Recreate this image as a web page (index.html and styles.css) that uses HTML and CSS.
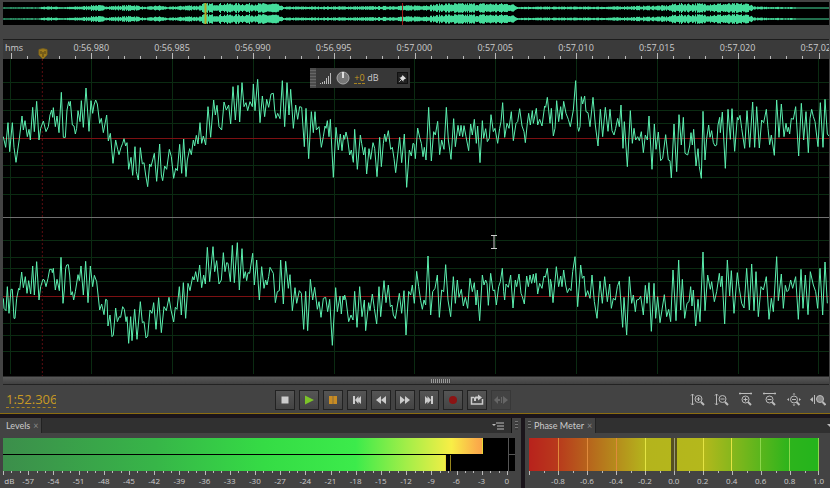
FILE: index.html
```html
<!DOCTYPE html>
<html lang="en">
<head>
  <meta charset="UTF-8" />
  <meta name="viewport" content="width=device-width, initial-scale=1.0" />
  <title>Waveform Editor</title>
  <link rel="stylesheet" href="styles.css">
</head>
<body>
  <section class="overview">
    <svg id="overview" viewBox="0 0 826 23" preserveAspectRatio="none">
      <path id="overviewWave" class="overview-wave" />
      <path class="red-cursor" d="M399.500 1V23" />
      <path class="gold-cursor" d="M202.500 1V22" />
    </svg>
  </section>

  <main class="editor">
    <div class="ruler">
      <svg viewBox="0 0 826 20" preserveAspectRatio="none"><path id="rulerTicks" /></svg>
      <div class="ruler-labels">
        <span class="unit">hms</span>
        <span>0:56.980</span><span>0:56.985</span><span>0:56.990</span><span>0:56.995</span><span>0:57.000</span><span>0:57.005</span><span>0:57.010</span><span>0:57.015</span><span>0:57.020</span><span>0:57.025</span>
      </div>
      <svg class="marker" viewBox="0 0 10 12"><path d="M1 1.500Q5 0 9 1.500V7L5 11L1 7Z" fill="#a07c1c" stroke="#80651a" /><path d="M3 3V6M7 3V6M5 4V9" stroke="#4a3c16" fill="none" /></svg>
    </div>

    <div class="wave-view">
      <svg class="waves" viewBox="9 177 2478 951" preserveAspectRatio="none">
        <path id="gridLines" class="grid-lines" />
        <path class="zero-line" d="M9 414H2487M9 888H2487" />
        <path class="divider" d="M9 651H2487" />
        <path class="playhead" d="M127 177V1128" />
        <!-- left channel -->
        <g transform="translate(0 180)">
          <polyline class="wave" points="10,230 17,262 24,188 29,275 37,188 42,262 48,307 58,236 66,168 70,210 75,182 82,230 87,208 91,240 98,142 103,215 110,124 117,240 122,205 130,183 138,215 145,200 150,165 155,150 158,172 160,143 166,200 171,168 177,218 184,97 190,232 196,232 201,150 206,125 209,138 211,124 217,195 222,198 226,222 230,205 234,152 240,185 244,122 250,202 258,84 267,214 273,122 278,160 282,135 287,120 292,132 299,190 304,175 310,218 320,165 325,243 331,220 339,310 347,240 353,268 357,284 363,262 368,250 372,236 377,258 381,248 386,328 393,292 398,346 405,260 409,335 415,360 421,263 427,312 432,308 437,345 443,380 449,312 453,320 463,280 470,364 479,252 484,345 488,362 494,318 500,328 508,268 514,290 521,355 527,325 532,332 539,253 545,340 551,237 558,350 562,300 569,266 574,284 580,240 584,258 589,226 594,252 600,188 605,250 610,228 617,255 624,140 632,232 641,120 646,165 651,136 657,200 665,210 672,126 679,150 686,135 692,192 699,80 706,180 714,76 719,186 726,68 732,140 738,128 743,152 750,125 757,140 760,72 765,152 773,58 780,188 787,108 794,170 800,118 806,142 813,102" />
        </g>
        <g transform="translate(810 180)">
          <polyline class="wave" points="3,102 10,100 14,150 18,175 23,160 30,176 37,62 44,200 51,68 57,165 62,88 70,205 77,135 83,178 89,140 95,142 103,260 108,145 116,296 124,155 130,218 135,155 139,210 147,200 154,262 160,230 165,198 168,205 172,182 177,230 181,178 190,352 198,202 205,270 211,222 216,272 221,225 224,238 228,216 233,238 239,285 244,270 250,307 254,208 262,328 271,225 275,250 281,285 285,262 290,342 297,266 302,298 309,248 314,265 321,350 329,232 334,320 340,250 344,222 348,245 355,212 362,268 367,262 372,295 377,338 389,232 395,308 403,222 410,382 418,270 424,288 429,250 432,252 436,296 443,204 449,232 454,250 459,290 463,262 468,300 476,142 484,303 491,215 496,225 503,184 509,284 515,240 522,268 529,142 535,240 543,298 551,176 556,260 564,196 569,228 573,196 578,230 582,197 588,230 596,272 602,192 607,225 613,178 619,250 623,198 630,308 637,182 641,235 647,206 652,245 658,235 663,164 670,215 675,205 683,250 689,205 693,185 698,128 704,232 711,190 717,205 724,155 730,242 738,190 743,185 749,146 756,198 762,215 766,248 772,190 776,160 781,195 787,152 790,190 799,145 803,195 809,178 816,198 824,138 827,142 832,112 840,190" />
        </g>
        <g transform="translate(1650 180)">
          <polyline class="wave" points="0,190 4,145 10,228 15,205 20,122 26,185 32,140 36,178 41,124 48,160 55,178 61,200 70,150 77,62 83,200 86,214 90,200 94,110 98,132 104,108 108,155 114,158 120,200 129,112 136,195 144,258 151,148 158,230 166,142 174,214 180,148 186,212 192,225 197,205 203,175 208,200 213,135 219,265 223,185 232,320 241,152 247,250 252,205 257,240 263,230 268,242 274,215 280,278 286,225 292,240 297,168 306,328 313,192 318,268 325,216 332,302 338,295 347,224 355,300 360,302 364,354 372,192 380,335 387,164 394,255 400,172 405,280 413,285 419,258 423,218 427,255 431,208 438,318 444,266 448,320 454,355 459,154 465,300 470,235 476,195 480,232 485,212 490,248 495,258 500,255 504,195 509,172 511,218 517,156 526,325 534,148 541,238 546,146 554,274 562,172 565,180 570,166 575,205 584,265 591,152 599,262 608,126 614,262 620,140 628,264 635,180 641,188 649,148 654,205 659,254 664,225 673,286 680,120 687,232 694,132 702,230 708,190 712,215 715,202 719,222 724,175 730,178 737,140 746,288 754,130 761,240 768,155 775,278 780,175 785,148 790,170 795,185 804,260 811,128 819,262 825,118 832,222 837,228" />
        </g>
        <!-- right channel -->
        <g transform="translate(0 660)">
          <polyline class="wave" points="10,235 12,265 18,272 22,200 27,280 33,208 37,208 42,295 45,295 50,235 56,205 59,210 65,156 70,203 76,170 81,220 86,182 92,222 98,138 103,225 110,125 117,240 122,200 129,178 133,180 138,200 144,175 149,148 155,148 157,158 160,145 166,210 171,178 178,212 183,112 189,250 193,210 197,145 200,135 205,134 209,165 213,225 217,215 221,240 226,215 234,164 238,182 243,138 250,225 257,124 264,248 271,138 278,200 283,166 290,185 299,270 305,252 312,284 317,238 321,240 324,318 330,285 336,350 340,345 347,264 352,305 358,290 362,292 368,260 373,268 378,305 381,290 386,370 392,290 396,362 404,268 411,358 421,245 427,308 432,305 438,354 443,348 450,270 456,280 461,248 468,328 476,233 484,338 492,260 499,272 507,232 513,270 521,306 526,262 531,268 538,200 544,285 550,188 557,295 564,190 570,212 578,170 582,180 587,155 593,185 599,135 605,203 611,165 616,192 622,82 629,185 639,80 644,155 650,122 657,192 664,180 670,98 675,155 680,128 684,130 691,185 697,76 703,188 712,68 718,210 726,86 731,175 736,155 740,182 744,158 749,160 758,100 763,195 770,120 778,240 785,140 792,205 797,180 801,195 806,170 810,142" />
        </g>
        <g transform="translate(810 660)">
          <polyline class="wave" points="0,142 10,160 16,248 22,215 28,212 32,120 40,252 47,124 55,205 60,164 67,272 75,203 80,250 88,212 94,220 101,328 107,214 113,332 121,178 128,240 134,202 142,268 147,245 153,292 160,235 167,232 173,275 179,238 187,376 197,203 202,275 210,228 214,282 219,228 222,240 224,225 228,240 236,305 243,285 249,300 254,214 261,322 269,200 276,290 283,240 287,332 296,248 300,272 307,222 313,265 320,312 327,200 332,290 342,182 348,248 355,195 361,260 366,255 370,285 376,296 388,220 395,280 402,212 408,345 416,214 422,225 427,195 433,250 440,154 446,200 452,242 457,268 462,240 467,255 474,108 482,285 488,215 495,205 502,165 508,292 515,210 521,215 527,134 534,240 542,290 550,170 556,250 562,180 567,232 574,208 580,258 586,232 593,265 600,175 607,215 613,188 618,255 622,210 629,302 637,165 642,195 647,180 651,190 655,256 662,160 669,212 674,210 679,255 686,200 691,185 697,145 701,215 704,240 708,192 715,202 722,165 729,264 736,180 740,200 747,162 753,220 757,230 763,252 770,168 775,200 780,165 785,190 790,162 794,188 798,160 803,222 809,190 816,205 822,168 826,172 832,145 840,230" />
        </g>
        <g transform="translate(1650 660)">
          <polyline class="wave" points="0,230 1,178 4,190 9,248 19,140 26,200 32,168 36,200 41,150 47,195 52,218 58,205 63,212 68,155 75,110 83,260 92,135 97,175 102,168 107,230 113,212 120,235 126,165 133,245 141,295 150,183 157,250 164,170 172,245 179,192 184,265 190,235 196,240 202,200 208,183 218,322 222,232 230,345 238,170 245,250 250,225 256,275 260,240 267,238 272,228 280,285 286,196 291,250 297,188 304,334 312,190 317,295 323,230 330,308 343,224 350,290 356,268 362,305 369,150 378,302 386,120 392,270 397,178 404,295 411,250 417,245 422,200 426,258 430,210 437,318 444,238 450,305 459,96 465,272 473,165 481,208 485,185 493,245 500,215 508,160 512,200 516,168 524,312 532,120 539,228 544,152 552,280 562,158 567,200 575,250 582,264 590,145 598,270 605,132 612,272 618,155 625,290 633,200 640,210 649,170 657,298 664,235 670,275 680,110 685,242 694,162 700,265 706,196 711,215 716,210 722,180 728,205 737,170 745,298 753,148 759,265 766,165 774,284 781,155 790,195 797,215 803,265 810,145 818,285 825,126 832,250" />
        </g>
      </svg>

      <div class="hud">
        <span class="hud-grip"></span>
        <svg class="bars" viewBox="0 0 12 12"><path d="M.5 12V11M2.500 12V10M4.500 12V9M6.500 12V6M8.500 12V4M10.500 12V1" /></svg>
        <svg class="knob" viewBox="0 0 14 14"><circle cx="7" cy="7" r="6" fill="#777" stroke="#aaa" /><path d="M7 1V7" stroke="#fff" stroke-width="1.500" /></svg>
        <label class="gain"><input id="gain" type="text" value="+0"> dB</label>
        <button class="pin" aria-label="Pin HUD"><svg viewBox="0 0 10 10"><path d="M5 1L9 5L7.500 5.500L6 7L6 8.500L1.500 4H3L4.500 2.500Z" fill="#ddd" /><path d="M4 6L1.500 8.500" stroke="#ddd" /></svg></button>
      </div>

      <svg class="text-cursor" viewBox="0 0 6 14"><path d="M0 .5H6M0 13.500H6M3 1V13" /></svg>
    </div>
    <div class="resize-bar"><span></span></div>
  </main>

  <div class="toolbar">
    <div class="time"><input type="text" value="1:52.306" aria-label="Time"></div>
    <div class="transport">
      <button aria-label="Stop"><svg viewBox="0 0 16 16"><path d="M4.500 4.500H11.500V11.500H4.500Z" /></svg></button>
      <button aria-label="Play" class="play"><svg viewBox="0 0 16 16"><path d="M4 3.500L13 8L4 12.500Z" /></svg></button>
      <button aria-label="Pause" class="pause"><svg viewBox="0 0 16 16"><path d="M4 4H7.500V12H4ZM8.500 4H12V12H8.500Z" /><path d="M4 4H12V12H4Z" opacity=".5" /></svg></button>
      <button aria-label="Previous"><svg viewBox="0 0 16 16"><path d="M4 4H6V12H4ZM12 4V12L9.500 9.500V12L6 8L9.500 4V6.500Z" /></svg></button>
      <button aria-label="Rewind"><svg viewBox="0 0 16 16"><path d="M8 4V12L3 8ZM13 4V12L8 8Z" /></svg></button>
      <button aria-label="Fast forward"><svg viewBox="0 0 16 16"><path d="M8 4V12L13 8ZM3 4V12L8 8Z" /></svg></button>
      <button aria-label="Next"><svg viewBox="0 0 16 16"><path d="M10 4H12V12H10ZM4 4V12L6.500 9.500V12L10 8L6.500 4V6.500Z" /></svg></button>
      <button aria-label="Record" class="record"><svg viewBox="0 0 16 16"><circle cx="8" cy="8" r="4" /></svg></button>
      <button aria-label="Loop"><svg viewBox="0 0 16 16"><path d="M5 5.500H2.500V12H13.500V7" fill="none" stroke="#ccc" stroke-width="1.500" /><path d="M5 9V6.500Q5 4.500 7 4.500H9V2.500L13 5.500L9 8.500V6.500H7V9Z" /></svg></button>
      <button aria-label="Skip selection" class="skip" disabled><svg viewBox="0 0 16 16"><path d="M5 4V7H7V9H5V12L1 8ZM8 5H9V11H8ZM10 4V12L15 8Z" /></svg></button>
    </div>
    <div class="zoom">
      <button aria-label="Zoom in amplitude"><svg viewBox="0 0 16 16"><path d="M2.500 2V13M1 3.500L2.500 2L4 3.500M1 11.500L2.500 13L4 11.500" /><circle cx="8.500" cy="7" r="3.500" /><path class="thick" d="M11 10L14 13" /><path d="M6.500 7H10.500M8.500 5V9" /></svg></button>
      <button aria-label="Zoom out amplitude"><svg viewBox="0 0 16 16"><path d="M2.500 2V13M1 3.500L2.500 2L4 3.500M1 11.500L2.500 13L4 11.500" /><circle cx="8.500" cy="7" r="3.500" /><path class="thick" d="M11 10L14 13" /><path d="M6.500 7H10.500" /></svg></button>
      <button aria-label="Zoom in time"><svg viewBox="0 0 16 16"><path d="M1 1.500H14M2 .5V2.500M13 .5V2.500" /><circle cx="7.500" cy="7.500" r="3.500" /><path class="thick" d="M10 10L13 13" /><path d="M5.500 7.500H9.500M7.500 5.500V9.500" /></svg></button>
      <button aria-label="Zoom out time"><svg viewBox="0 0 16 16"><path d="M1 1.500H14M2 .5V2.500M13 .5V2.500" /><circle cx="7.500" cy="7.500" r="3.500" /><path class="thick" d="M10 10L13 13" /><path d="M5.500 7.500H9.500" /></svg></button>
      <button aria-label="Zoom out full"><svg viewBox="0 0 16 16"><circle cx="8" cy="7.500" r="3.500" /><path class="thick" d="M10.500 10L13.500 13" /><path d="M6 7.500H10" /><path class="solid" d="M8 1L9.500 2.500H6.500ZM1 7.500L3 6V9ZM15 7.500L13 6V9ZM8 14L6.500 12.500H9.500Z" /></svg></button>
      <button aria-label="Zoom to selection"><svg viewBox="0 0 16 16"><path d="M4.500 3V12" /><path class="solid" d="M0 7.500L3 5V10Z" /><circle class="filled" cx="10" cy="7" r="3.500" /><path class="thick" d="M12.500 10L15.500 13" /></svg></button>
    </div>
  </div>

  <div class="panels">
    <section class="panel levels">
      <header class="tabs">
        <h2 class="tab">Levels <button aria-label="Close Levels">×</button></h2>
        <span class="tab-fill"></span>
        <button class="menu" aria-label="Levels menu"><svg viewBox="0 0 12 8"><path d="M0 2H4L2 4Z" /><path d="M4 .5H12V1.500H4ZM5 3.500H12V4.500H5ZM5 6.500H12V7.500H5Z" /></svg></button>
        <span class="grip"></span>
      </header>
      <div class="panel-body">
        <svg class="meter" viewBox="0 0 512 33" preserveAspectRatio="none">
          <defs>
            <linearGradient id="levelFill" gradientUnits="userSpaceOnUse" x1="0" y1="0" x2="504" y2="0">
              <stop offset="0" stop-color="#3c8e4b" /><stop offset=".3" stop-color="#37b548" /><stop offset=".52" stop-color="#35dc45" /><stop offset=".7" stop-color="#3ceb4b" /><stop offset=".8" stop-color="#a2ee48" /><stop offset=".89" stop-color="#f8ee46" /><stop offset=".94" stop-color="#fbae4a" /><stop offset="1" stop-color="#f67a42" />
            </linearGradient>
          </defs>
          <path fill="#000" d="M0 0H512V33H0Z" />
          <path fill="url(#levelFill)" d="M0 0H480V16H0ZM0 17H442V33H0Z" />
          <path stroke="#e8d838" d="M479.500 0V16M442.500 17V33" />
          <path stroke="#98861d" d="M447.500 17V33" />
          <path stroke="#555" d="M505.500 0V33M505 16.500H512" />
        </svg>
        <svg class="ticks" viewBox="0 0 512 4" preserveAspectRatio="none"><path id="levelTicks" /></svg>
        <div class="level-scale">
          <span class="db">dB</span><span>-57</span><span>-54</span><span>-51</span><span>-48</span><span>-45</span><span>-42</span><span>-39</span><span>-36</span><span>-33</span><span>-30</span><span>-27</span><span>-24</span><span>-21</span><span>-18</span><span>-15</span><span>-12</span><span>-9</span><span>-6</span><span>-3</span><span>0</span>
        </div>
      </div>
    </section>

    <section class="panel phase">
      <header class="tabs">
        <span class="grip"></span>
        <h2 class="tab">Phase Meter <button aria-label="Close Phase Meter">×</button></h2>
        <span class="tab-fill"></span>
        <button class="menu more" aria-label="Phase Meter menu"><svg viewBox="0 0 3 8"><path d="M0 2H3V5Z" /></svg></button>
      </header>
      <div class="panel-body">
        <svg class="meter" viewBox="0 0 290 33" preserveAspectRatio="none">
          <defs>
            <linearGradient id="phaseFill">
              <stop offset="0" stop-color="#b8221c" /><stop offset=".1" stop-color="#b83a1c" /><stop offset=".4" stop-color="#b4b41c" /><stop offset=".6" stop-color="#b4b81c" /><stop offset=".9" stop-color="#2cb41c" /><stop offset="1" stop-color="#24b41c" />
            </linearGradient>
          </defs>
          <path fill="url(#phaseFill)" d="M0 0H290V33H0Z" />
          <path stroke="#e08a3c" d="M29.500 0V33M58.500 0V33M87.500 0V33" />
          <path stroke="#e4e444" d="M116.500 0V33M174.500 0V33M202.500 0V33" />
          <path stroke="#8cd84c" d="M231.500 0V33M260.500 0V33M289.500 0V33" />
          <path fill="#554f20" d="M142 0H148V33H142Z" />
          <path stroke="#9a9878" d="M145.500 0V33" />
        </svg>
        <svg class="ticks" viewBox="0 0 290 4" preserveAspectRatio="none"><path id="phaseTicks" /></svg>
        <div class="phase-scale">
          <span>-0.8</span><span>-0.6</span><span>-0.4</span><span>-0.2</span><span>0.0</span><span>0.2</span><span>0.4</span><span>0.6</span><span>0.8</span><span>1.0</span>
        </div>
      </div>
    </section>
  </div>

  <script src="script.js"></script>
</body>
</html>
```
FILE: styles.css
```css
* {
  box-sizing: border-box;
}

body {
  margin: 0;
  min-height: 100vh;
  display: flex;
  flex-direction: column;
  overflow: hidden;
  background: #434343;
  color: #ccc;
  font-family: "Open Sans", sans-serif;
  font-size: 9px;
  line-height: 12px;
}

svg {
  display: block;
}

button {
  margin: 0;
  padding: 0;
  border: 0;
  background: none;
  color: inherit;
  font: inherit;
}

input {
  padding: 0;
  border: 0;
  border-bottom: 1px dashed #a88420;
  border-radius: 0;
  background: none;
  color: #c89a24;
  font: inherit;
}

.overview {
  margin: 2px 1px 14px 3px;
  background: #000;
}

.overview svg {
  width: 100%;
  height: 23px;
}

.overview-wave {
  stroke: #45dc9b;
  fill: none;
}

.red-cursor {
  stroke: #a01818;
}

.gold-cursor {
  stroke: #b8a422;
  stroke-width: 2;
}

.editor {
  flex: 1;
  display: flex;
  flex-direction: column;
  margin: 0 1px 0 3px;
}

.ruler {
  position: relative;
  height: 20px;
  border-top: 1px solid #1c1c1c;
  background: #3a3a3a;
  overflow: hidden;
}

.ruler > svg:first-child {
  position: absolute;
  width: 100%;
  height: 20px;
}

#rulerTicks,
#levelTicks,
#phaseTicks {
  stroke: #bbb;
  shape-rendering: crispEdges;
}

.ruler-labels {
  display: flex;
  padding-top: 2px;
}

.ruler-labels span {
  flex: 0 0 9.780%;
  text-align: center;
}

.ruler-labels .unit {
  flex-basis: 5.800%;
  padding-left: 2px;
  text-align: left;
}

.marker {
  position: absolute;
  top: 8px;
  left: 4.200%;
  width: 10px;
  height: 12px;
}

.wave-view {
  position: relative;
  flex: 1;
  display: flex;
  min-height: 200px;
  background: #000;
}

.waves {
  flex: 1;
  width: 100%;
  height: auto;
  min-height: 0;
}

.waves path,
.waves polyline {
  fill: none;
  vector-effect: non-scaling-stroke;
}

.grid-lines {
  stroke: #0b2b12;
  shape-rendering: crispEdges;
}

.zero-line {
  stroke: #7c1012;
  shape-rendering: crispEdges;
}

.waves .divider {
  stroke: #707070;
  shape-rendering: crispEdges;
}

.playhead {
  stroke: #5c0d10;
  stroke-dasharray: 2 2;
}

.wave {
  stroke: #5cf0b0;
}

.hud {
  position: absolute;
  top: 9px;
  left: 37.200%;
  display: flex;
  align-items: center;
  gap: 4px;
  width: 100px;
  height: 20px;
  padding-right: 2px;
  background: #373737;
}

.hud-grip {
  width: 6px;
  height: 20px;
  background: repeating-linear-gradient(#4c4c4c 0 2px, #666 2px 3px);
}

.bars {
  width: 12px;
  height: 12px;
  stroke: #bbb;
}

.knob {
  width: 14px;
  height: 14px;
}

.gain {
  flex: 1;
  display: flex;
  gap: 2px;
}

.gain input {
  width: 11px;
  height: 12px;
}

.pin {
  width: 11px;
  height: 12px;
  border: 1px solid #111;
  background: #222;
}

.text-cursor {
  position: absolute;
  top: 176px;
  left: 59.100%;
  width: 6px;
  height: 14px;
  stroke: #ccc;
}

.resize-bar {
  display: flex;
  justify-content: center;
  align-items: center;
  height: 9px;
  padding-left: 50px;
  border-top: 1px solid #2a2a2a;
  border-bottom: 1px solid #222;
  background: linear-gradient(#585858, #404040);
}

.resize-bar span {
  width: 20px;
  height: 4px;
  background: repeating-linear-gradient(90deg, #999 0 1px, #444 1px 2px);
}

.toolbar {
  display: flex;
  justify-content: space-between;
  align-items: center;
  height: 29px;
  padding: 1px 0 0 6px;
  border-bottom: 1px solid #8c6c10;
}

.time {
  width: 94px;
}

.time input {
  width: 50px;
  height: 16px;
  font-size: 13px;
  line-height: 16px;
}

.transport {
  display: flex;
  gap: 4px;
}

.transport button {
  display: flex;
  align-items: center;
  justify-content: center;
  width: 20px;
  height: 20px;
  border: 1px solid #222;
  background: linear-gradient(#555, #444);
  fill: #ccc;
}

.transport svg,
.zoom svg {
  width: 16px;
  height: 16px;
}

.transport .play {
  fill: #7cc428;
}

.transport .pause {
  fill: #c88c24;
}

.transport .record {
  fill: #8c1414;
}

.transport .skip {
  border-color: #383838;
  background: none;
  fill: #666;
}

.zoom {
  display: flex;
}

.zoom button {
  display: flex;
  justify-content: center;
  width: 24px;
  height: 16px;
  fill: none;
  stroke: #bbb;
}

.zoom .thick {
  stroke-width: 2;
}

.zoom .solid {
  fill: #bbb;
  stroke: none;
}

.zoom .filled {
  fill: #888;
}

.panels {
  display: flex;
  gap: 4px;
  padding-top: 4px;
  background: #1b151b;
}

.panel {
  background: #434343;
}

.levels {
  flex: 521;
}

.phase {
  flex: 305;
}

.tabs {
  display: flex;
  align-items: center;
  height: 15px;
}

.tab {
  display: flex;
  align-items: center;
  gap: 3px;
  margin: 0;
  padding: 0 3px;
  font-family: Lato, sans-serif;
  font-size: 9px;
  font-weight: normal;
}

.levels .tab {
  padding-left: 6px;
}

.tab button {
  color: #888;
}

.tab-fill {
  flex: 1;
  height: 15px;
  border-left: 1px solid #222;
  background: #303030;
}

.menu {
  width: 20px;
  height: 15px;
  border-right: 1px solid #111;
  background: #303030;
}

.menu svg {
  width: 12px;
  height: 8px;
  fill: #bbb;
}

.more {
  width: 3px;
  border: 0;
}

.more svg {
  width: 3px;
}

.grip {
  width: 3px;
  height: 9px;
  margin: 0 3px;
  background: repeating-linear-gradient(#777 0 1px, #3a3a3a 1px 3px);
}

.phase .grip {
  margin: 0 0 0 3px;
}

.panel-body {
  padding: 5px 6px 2px 3px;
}

.phase .panel-body {
  padding: 5px 11px 2px 4px;
}

.meter {
  width: 100%;
  height: 33px;
}

.ticks {
  width: 100%;
  height: 4px;
}

.level-scale,
.phase-scale {
  display: flex;
  font-size: 8px;
}

.level-scale span {
  flex: 0 0 4.922%;
  text-align: center;
}

.level-scale .db {
  flex-basis: 2.461%;
}

.phase-scale {
  padding-left: 5%;
  margin-right: -14px;
}

.phase-scale span {
  flex: 1;
  text-align: center;
}
```
FILE: script.js
```js
const majors = 10;
const step = 80.8;

// time ruler: 5 divisions per label
let ticks = "";
for (let i = 0; i <= majors * 5; i++) {
  const x = (8 + i * step / 5).toFixed(1);
  ticks += `M${x} 20V${i % 5 ? 16 : 13}`;
}
document.getElementById("rulerTicks").setAttribute("d", ticks);

// grid behind the waveforms
let grid = "";
for (let i = 0; i <= majors; i++) {
  grid += `M${Math.round(32 + i * step * 3)} 177V1122`;
}
[247, 298, 331, 370, 457, 497, 532, 582, 721, 771, 804, 844, 931, 971, 1005, 1055].forEach(y => {
  grid += `M9 ${y}H2487`;
});
document.getElementById("gridLines").setAttribute("d", grid);

// overview: [x, amplitude] of the whole file
const envelope = [[0, 0.6], [35, 0.8], [45, 2], [60, 1], [80, 2], [92, 3.5], [105, 2], [130, 3.5], [142, 1.2], [155, 3], [165, 1.2], [185, 3], [195, 2.5], [200, 5], [272, 5], [280, 1.5], [375, 2], [395, 2.5], [428, 3.5], [440, 5], [508, 5], [514, 1.5], [600, 1.5], [665, 3], [671, 5], [745, 5], [752, 1.5], [790, 1], [800, 0.4], [826, 0.4]];
let seed = 7;

function random() {
  seed = (seed * 16807) % 2147483647;
  return seed / 2147483647;
}

function amplitude(x) {
  const i = envelope.findIndex(p => p[0] > x);
  if (i < 1) return 0.4;
  const [x0, a0] = envelope[i - 1];
  const [x1, a1] = envelope[i];
  return a0 + (a1 - a0) * (x - x0) / (x1 - x0);
}

let wave = "";
for (let x = 0; x < 826; x++) {
  const a = Math.max(0.5, amplitude(x) * (0.5 + random() * 0.5));
  wave += `M${x}.5 ${(6 - a).toFixed(1)}V${(6 + a).toFixed(1)}`;
  wave += `M${x}.5 ${(17 - a).toFixed(1)}V${(17 + a).toFixed(1)}`;
}
document.getElementById("overviewWave").setAttribute("d", wave);

// meter scales
let level = "";
for (let i = 0; i <= 60; i++) {
  level += `M${(i * 8.4 + 0.5).toFixed(1)} 0V${i % 3 ? 2 : 4}`;
}
document.getElementById("levelTicks").setAttribute("d", level);

let phase = "";
for (let i = 0; i <= 20; i++) {
  phase += `M${Math.min(i * 14.5 + 0.5, 289.5)} 0V${i % 2 ? 2 : 4}`;
}
document.getElementById("phaseTicks").setAttribute("d", phase);
```
